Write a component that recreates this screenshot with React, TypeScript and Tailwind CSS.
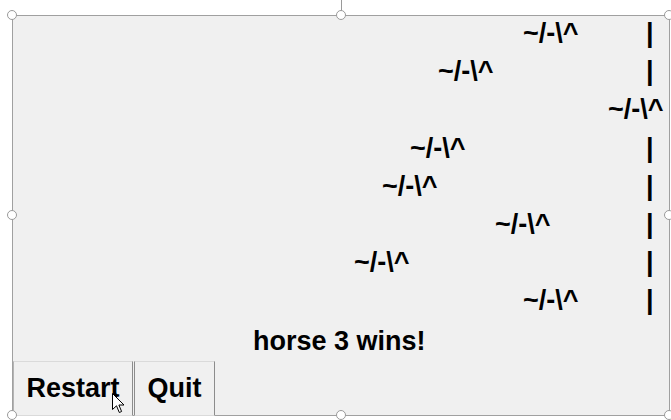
import React from "react";

// offsets (px from the form's left edge) of each horse on the track
const HORSES = [510, 425, 595, 397, 369, 482, 341, 510];

const HANDLES = [
  "left-[7px] top-[10px]",
  "left-[336px] top-[10px]",
  "left-[664px] top-[10px]",
  "left-[7px] top-[210px]",
  "left-[664px] top-[210px]",
  "left-[7px] top-[410px]",
  "left-[336px] top-[410px]",
  "left-[664px] top-[410px]",
];

function Cursor() {
  return (
    <svg
      className="pointer-events-none absolute left-[112px] top-[393px]"
      width="14"
      height="21"
      viewBox="0 0 14 21"
    >
      <path
        d="M0.5 0.5 L0.5 16.5 L4.5 12.8 L7.3 19.5 L9.6 18.5 L6.9 12 L12 12 Z"
        fill="#ffffff"
        stroke="#000000"
        strokeWidth="1"
        strokeLinejoin="miter"
      />
    </svg>
  );
}

export default function App() {
  return (
    <div className="relative h-[420px] w-[671px] overflow-hidden bg-white font-['Liberation_Sans',Arial,sans-serif] text-[27px] font-bold text-black">
      <div className="absolute left-[341px] top-0 h-[11px] w-px bg-[#9a9a9a]" />

      <div className="ml-[12px] mt-[15px] flex h-[401px] w-[658px] flex-col border border-[#a0a0a0] bg-[#f0f0f0] pt-[2px]">
        {HORSES.map((x, i) => (
          <div key={i} className="relative h-[38.2px] shrink-0 leading-[31px]">
            <span className="absolute left-[633px] top-0">|</span>
            <span className="absolute top-0 bg-[#f0f0f0]" style={{ left: x }}>
              ~/-\^
            </span>
          </div>
        ))}

        <div className="mt-[2px] pl-[240px] leading-[31px]">horse 3 wins!</div>

        <div className="mt-[4px] flex gap-px">
          <button className="h-[55px] w-[120px] border border-[#dadada] border-r-[#8c8c8c] border-l-[#b4b4b4] bg-[#f0f0f0] leading-none">
            Restart
          </button>
          <button className="h-[55px] w-[81px] border border-[#dadada] border-r-[#8c8c8c] border-l-[#8c8c8c] bg-[#f0f0f0] leading-none">
            Quit
          </button>
        </div>
      </div>

      {HANDLES.map((pos) => (
        <div
          key={pos}
          className={`absolute h-[10px] w-[10px] rounded-full border-[1.5px] border-[#9a9a9a] bg-white ${pos}`}
        />
      ))}

      <Cursor />
    </div>
  );
}
